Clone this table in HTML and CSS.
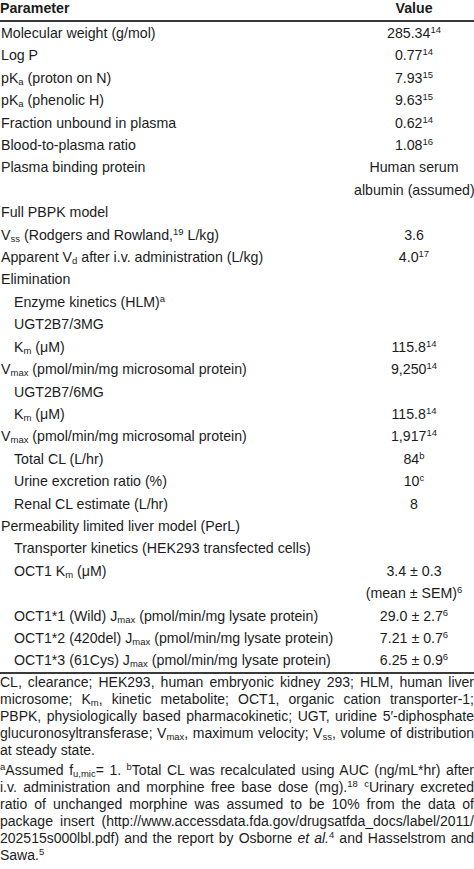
FILE: index.html
```html
<!DOCTYPE html>
<html lang="en">
<head>
<meta charset="utf-8">
<title>Morphine PBPK parameters</title>
<link rel="stylesheet" href="styles.css">
</head>
<body>
<table class="params">
  <colgroup><col class="c-param"><col class="c-value"></colgroup>
  <thead>
    <tr><th class="h-param">Parameter</th><th class="h-value">Value</th></tr>
  </thead>
  <tbody>
    <tr><td>Molecular weight (g/mol)</td><td class="val">285.34<sup>14</sup></td></tr>
    <tr><td>Log P</td><td class="val">0.77<sup>14</sup></td></tr>
    <tr><td>pK<sub>a</sub> (proton on N)</td><td class="val">7.93<sup>15</sup></td></tr>
    <tr><td>pK<sub>a</sub> (phenolic H)</td><td class="val">9.63<sup>15</sup></td></tr>
    <tr><td>Fraction unbound in plasma</td><td class="val">0.62<sup>14</sup></td></tr>
    <tr><td>Blood-to-plasma ratio</td><td class="val">1.08<sup>16</sup></td></tr>
    <tr><td class="top">Plasma binding protein</td><td class="val">Human serum<br>albumin (assumed)</td></tr>
    <tr><td>Full PBPK model</td><td class="val"></td></tr>
    <tr><td>V<sub>ss</sub> (Rodgers and Rowland,<sup>19</sup> L/kg)</td><td class="val">3.6</td></tr>
    <tr><td>Apparent V<sub>d</sub> after i.v. administration (L/kg)</td><td class="val">4.0<sup>17</sup></td></tr>
    <tr><td>Elimination</td><td class="val"></td></tr>
    <tr><td class="ind">Enzyme kinetics (HLM)<sup>a</sup></td><td class="val"></td></tr>
    <tr><td class="ind">UGT2B7/3MG</td><td class="val"></td></tr>
    <tr><td class="ind">K<sub>m</sub> (μM)</td><td class="val">115.8<sup>14</sup></td></tr>
    <tr><td>V<sub>max</sub> (pmol/min/mg microsomal protein)</td><td class="val">9,250<sup>14</sup></td></tr>
    <tr><td class="ind">UGT2B7/6MG</td><td class="val"></td></tr>
    <tr><td class="ind">K<sub>m</sub> (μM)</td><td class="val">115.8<sup>14</sup></td></tr>
    <tr><td>V<sub>max</sub> (pmol/min/mg microsomal protein)</td><td class="val">1,917<sup>14</sup></td></tr>
    <tr><td class="ind">Total CL (L/hr)</td><td class="val">84<sup>b</sup></td></tr>
    <tr><td class="ind">Urine excretion ratio (%)</td><td class="val">10<sup>c</sup></td></tr>
    <tr><td class="ind">Renal CL estimate (L/hr)</td><td class="val">8</td></tr>
    <tr><td>Permeability limited liver model (PerL)</td><td class="val"></td></tr>
    <tr><td class="ind">Transporter kinetics (HEK293 transfected cells)</td><td class="val"></td></tr>
    <tr><td class="ind top">OCT1 K<sub>m</sub> (μM)</td><td class="val">3.4 ± 0.3<br>(mean ± SEM)<sup>6</sup></td></tr>
    <tr><td class="ind">OCT1*1 (Wild) J<sub>max</sub> (pmol/min/mg lysate protein)</td><td class="val">29.0 ± 2.7<sup>6</sup></td></tr>
    <tr><td class="ind">OCT1*2 (420del) J<sub>max</sub> (pmol/min/mg lysate protein)</td><td class="val">7.21 ± 0.7<sup>6</sup></td></tr>
    <tr><td class="ind">OCT1*3 (61Cys) J<sub>max</sub> (pmol/min/mg lysate protein)</td><td class="val">6.25 ± 0.9<sup>6</sup></td></tr>
  </tbody>
</table>
<div class="notes">
  <p class="para">
    <span class="ln">CL, clearance; HEK293, human embryonic kidney 293; HLM, human liver</span>
    <span class="ln">microsome; K<sub>m</sub>, kinetic metabolite; OCT1, organic cation transporter-1;</span>
    <span class="ln">PBPK, physiologically based pharmacokinetic; UGT, uridine 5′-diphosphate</span>
    <span class="ln">glucuronosyltransferase; V<sub>max</sub>, maximum velocity; V<sub>ss</sub>, volume of distribution</span>
    <span class="ln last">at steady state.</span>
  </p>
  <p class="para">
    <span class="ln"><sup>a</sup>Assumed f<sub>u,mic</sub>= 1. <sup>b</sup>Total CL was recalculated using AUC (ng/mL*hr) after</span>
    <span class="ln">i.v. administration and morphine free base dose (mg).<sup>18</sup> <sup>c</sup>Urinary excreted</span>
    <span class="ln">ratio of unchanged morphine was assumed to be 10% from the data of</span>
    <span class="ln">package insert (http://www.accessdata.fda.gov/drugsatfda_docs/label/2011/</span>
    <span class="ln">202515s000lbl.pdf) and the report by Osborne <i>et al.</i><sup>4</sup> and Hasselstrom and</span>
    <span class="ln last">Sawa.<sup>5</sup></span>
  </p>
</div>
</body>
</html>
```

FILE: styles.css
```css
html, body {
  margin: 0;
  padding: 0;
  background: #ffffff;
}

body {
  width: 474px;
  color: #1c1c1c;
  font-family: "Liberation Sans", Arial, Helvetica, sans-serif;
  font-size: 14px;
}

.params {
  width: 474px;
  border-collapse: collapse;
  table-layout: fixed;
  font-size: 14.2px;
}

.c-param { width: 354px; }
.c-value { width: 120px; }

.params th {
  font-weight: bold;
  line-height: 16px;
  padding: 0 0 4px 0;
  border-bottom: 2px solid #3a3a3a;
}

.h-param {
  text-align: left;
  padding-left: 1px;
}

.h-value {
  text-align: center;
}

.params td {
  padding: 0 0 0 1px;
  line-height: 22.4px;
  white-space: nowrap;
  vertical-align: top;
}

.params td.ind {
  padding-left: 14px;
}

.params td.val {
  padding: 0;
  text-align: center;
}

.params tbody tr:last-child td {
  border-bottom: 2px solid #3a3a3a;
}

sup, sub {
  font-size: 9.5px;
  line-height: 0;
}

sup {
  vertical-align: 5px;
}

sub {
  vertical-align: -2px;
}

.notes {
  width: 474px;
}

.para {
  margin: 0 0 3px 0;
}

.ln {
  display: block;
  line-height: 17px;
  text-align: justify;
  text-align-last: justify;
  white-space: nowrap;
}

.ln.last {
  text-align-last: left;
}
```
